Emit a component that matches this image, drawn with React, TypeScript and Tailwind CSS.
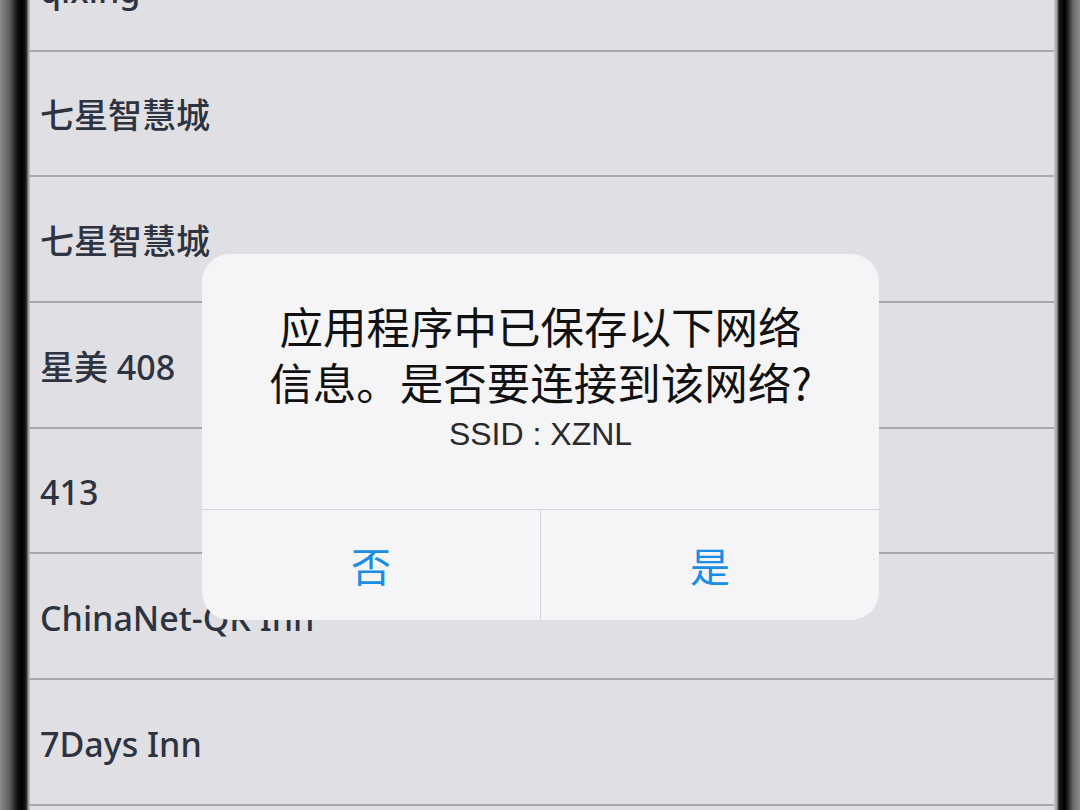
import React from "react";

const rows = ["qixing", "七星智慧城", "七星智慧城", "星美 408", "413", "ChinaNet-QK Inn", "7Days Inn", ""];

export default function App() {
  return (
    <div
      className="relative flex h-[810px] w-[1080px] overflow-hidden bg-[#e0dfe3]"
      style={{ fontFamily: '"Noto Sans", "Noto Sans CJK SC", sans-serif' }}
    >
      <div className="h-full w-[30px] shrink-0 bg-[linear-gradient(to_right,#8c8c8c_0px,#5a5a5a_10px,#111_17px,#000_22px,#1a1a1a_26px,#b5b5b5_29px)]" />
      <div className="flex-1 overflow-hidden">
        <div className="-mt-[74px] flex flex-col">
          {rows.map((r, i) => (
            <div
              key={i}
              className="flex h-[125.67px] shrink-0 items-center border-b-2 border-[#a9a9ad] pl-[10px] pt-[5px] text-[34px] font-medium text-[#2d3340]"
            >
              {r}
            </div>
          ))}
        </div>
      </div>
      <div className="h-full w-[26px] shrink-0 bg-[linear-gradient(to_right,#c8c8cc_0px,#9a9a9a_3px,#1a1a1a_5px,#000_11px,#222_14px,#6a6a6a_19px,#8c8c8c_26px)]" />

      <div className="absolute left-[202px] top-[254px] flex h-[366px] w-[677px] flex-col overflow-hidden rounded-[28px] bg-[#f5f5f7]">
        <div className="flex flex-1 flex-col items-center pt-[44px]">
          <div
            className="text-center text-[43.5px] leading-[56px] text-[#111]"
            style={{ fontFamily: '"Noto Sans CJK SC", sans-serif' }}
          >
            应用程序中已保存以下网络
            <br />
            信息。是否要连接到该网络?
          </div>
          <div className="mt-[4px] text-[32px] leading-[40px] text-[#2a2a2a]" style={{ fontFamily: '"Liberation Sans", sans-serif' }}>
            SSID : XZNL
          </div>
        </div>
        <div className="flex h-[111px] border-t border-[#d6d6da]">
          <div className="flex flex-1 items-center justify-center border-r border-[#d6d6da] text-[40px] text-[#1a8de4]" style={{ fontFamily: '"Noto Sans CJK SC", sans-serif' }}>
            否
          </div>
          <div className="flex flex-1 items-center justify-center text-[40px] text-[#1a8de4]" style={{ fontFamily: '"Noto Sans CJK SC", sans-serif' }}>
            是
          </div>
        </div>
      </div>
    </div>
  );
}
